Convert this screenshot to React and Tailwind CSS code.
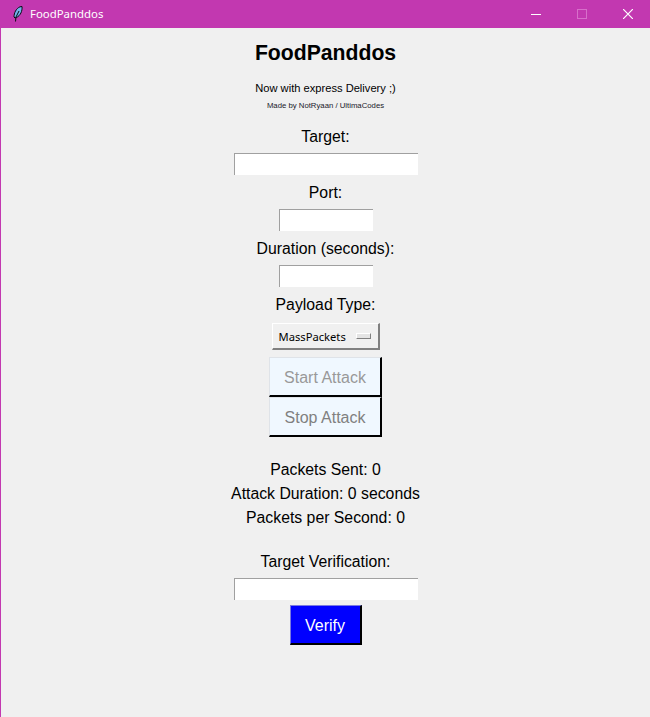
import React from 'react';

const font = { fontFamily: '"Liberation Sans", Arial, sans-serif' };

function Feather() {
  return (
    <svg width="11" height="16" viewBox="0 0 11 16" className="shrink-0">
      <path d="M1 11 C1 7 3 2.5 7 0.8 L9 0.5 C9.5 5 7.5 9.5 3.5 11.5 L2 12 Z" fill="#6fb2ea" stroke="#0a0a14" strokeWidth="1" />
      <path d="M2.5 15.5 L3 11 L6 5" fill="none" stroke="#0a0a14" strokeWidth="1" />
    </svg>
  );
}

function TitleBar() {
  return (
    <div className="h-7 shrink-0 flex items-center bg-[#c238b0] text-white">
      <div className="ml-3 w-[17px] flex"><Feather /></div>
      <span className="text-[11.4px] font-['Noto_Sans',sans-serif]">FoodPanddos</span>
      <div className="ml-auto flex items-center mr-[-1px]">
        <div className="w-[46px] flex justify-center"><div className="w-2.5 h-px bg-white" /></div>
        <div className="w-[46px] flex justify-center"><div className="w-2.5 h-2.5 border border-[#d76fca]" /></div>
        <div className="w-[46px] flex justify-center">
          <svg width="10" height="10" viewBox="0 0 10 10"><path d="M0 0 L10 10 M10 0 L0 10" stroke="#fff" strokeWidth="1.2" /></svg>
        </div>
      </div>
    </div>
  );
}

function Label({ children, className = '' }) {
  return <div className={`text-[15.8px] leading-[18px] text-black ${className}`}>{children}</div>;
}

function Field({ className = '' }) {
  return <div className={`h-[22px] bg-white border-t border-l border-t-[#a0a0a0] border-l-[#a0a0a0] ${className}`} />;
}

function ActionButton({ children, className = '' }) {
  return (
    <div className={`w-[113px] h-10 pt-[2px] flex items-center justify-center bg-[#f0f8ff] text-base border-t border-l border-t-[#dfe3e8] border-l-[#dfe3e8] border-r-2 border-b-2 border-r-black border-b-black ${className}`}>
      {children}
    </div>
  );
}

export default function App() {
  return (
    <div className="w-[650px] h-[717px] flex flex-col bg-[#f0f0f0] border-l border-l-[#c238b0] overflow-hidden" style={font}>
      <TitleBar />
      <main className="flex flex-col items-center">
        <h1 className="mt-[13px] text-[21.2px] leading-6 font-bold text-black">FoodPanddos</h1>
        <p className="mt-[17px] text-[11.15px] leading-[13px] text-black">Now with express Delivery ;)</p>
        <p className="mt-[5px] text-[7.75px] leading-[12px] text-[#1a1a2a]">Made by NotRyaan / UltimaCodes</p>
        <Label className="mt-4">Target:</Label>
        <Field className="w-[184px] mt-[7px]" />
        <Label className="mt-[9px]">Port:</Label>
        <Field className="w-[94px] mt-[7px]" />
        <Label className="mt-[9px]">Duration (seconds):</Label>
        <Field className="w-[94px] mt-[7px]" />
        <Label className="mt-[9px]">Payload Type:</Label>
        <div className="mt-[9px] w-[108px] h-[27px] flex items-center pl-[6px] pr-[7px] pt-[3px] bg-[#f0f0f0] border border-t-white border-l-white border-r-2 border-b-2 border-r-[#808080] border-b-[#808080] text-[11.2px] font-['Noto_Sans',sans-serif] text-black">
          <span>MassPackets</span>
          <span className="ml-auto mb-[3px] w-[15px] h-[6px] bg-[#e4e4e4] border border-t-white border-l-white border-r-[#808080] border-b-[#808080]" />
        </div>
        <ActionButton className="mt-[7px] text-[#999999]">Start Attack</ActionButton>
        <ActionButton className="text-[#808080]">Stop Attack</ActionButton>
        <Label className="mt-6">Packets Sent: 0</Label>
        <Label className="mt-1.5">Attack Duration: 0 seconds</Label>
        <Label className="mt-1.5">Packets per Second: 0</Label>
        <Label className="mt-[26px]">Target Verification:</Label>
        <Field className="w-[184px] mt-[7px]" />
        <div className="mt-[5px] w-[72px] h-10 pt-[2px] flex items-center justify-center bg-[#0000ff] text-white text-base border-t border-l border-t-[#7a7ae0] border-l-[#7a7ae0] border-r-2 border-b-2 border-r-black border-b-black">
          Verify
        </div>
      </main>
    </div>
  );
}
